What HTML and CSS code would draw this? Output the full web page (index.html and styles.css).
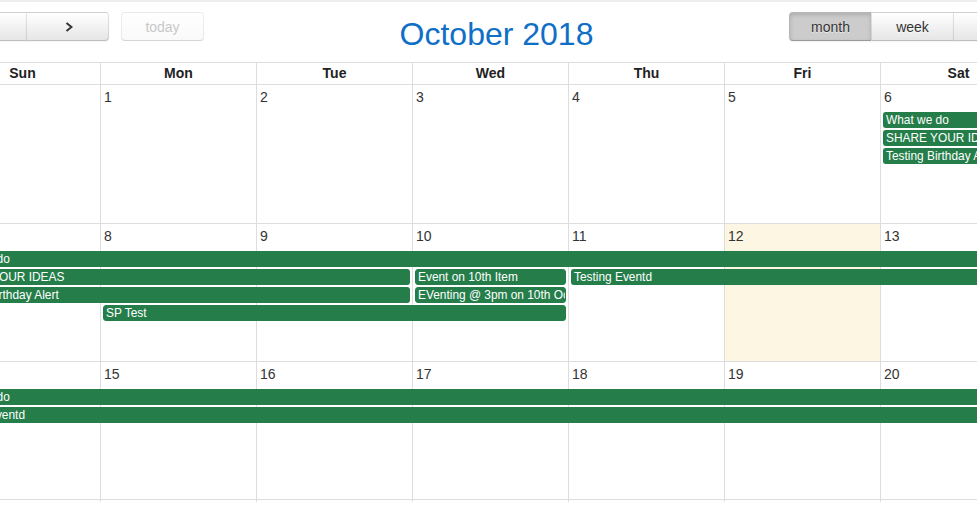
FILE: index.html
```html
<!DOCTYPE html>
<html lang="en">
<head>
<meta charset="utf-8">
<title>October 2018 – Calendar</title>
<link rel="stylesheet" href="styles.css">
</head>
<body>
<div class="page">
  <div class="calendar">
    <div class="toolbar">
      <div class="tb-left">
        <div class="btn-group">
          <button class="btn btn-first" aria-label="prev"><svg class="chev" width="8" height="10" viewBox="0 0 8 10"><polyline points="6.5,1 1.5,5 6.5,9" /></svg></button>
          <button class="btn btn-last" aria-label="next"><svg class="chev" width="8" height="10" viewBox="0 0 8 10"><polyline points="1.5,1 6.5,5 1.5,9" /></svg></button>
        </div>
        <button class="btn btn-alone btn-disabled">today</button>
      </div>
      <h2 class="title">October 2018</h2>
      <div class="btn-group">
        <button class="btn btn-first btn-active">month</button>
        <button class="btn">week</button>
        <button class="btn btn-last">day</button>
      </div>
    </div>

    <div class="view">
      <div class="head-row">
        <div class="head-cell">Sun</div>
        <div class="head-cell">Mon</div>
        <div class="head-cell">Tue</div>
        <div class="head-cell">Wed</div>
        <div class="head-cell">Thu</div>
        <div class="head-cell">Fri</div>
        <div class="head-cell">Sat</div>
      </div>

      <div class="scroller">
        <div class="week week-first">
          <div class="day other"><span class="num">30</span></div>
          <div class="day"><span class="num">1</span></div>
          <div class="day"><span class="num">2</span></div>
          <div class="day"><span class="num">3</span></div>
          <div class="day"><span class="num">4</span></div>
          <div class="day"><span class="num">5</span></div>
          <div class="day"><span class="num">6</span></div>

          <div class="ev r2 c7 span1 not-end">What we do</div>
          <div class="ev r3 c7 span1 not-end">SHARE YOUR IDEAS</div>
          <div class="ev r4 c7 span1 not-end">Testing Birthday Alert</div>
        </div>

        <div class="week">
          <div class="day"><span class="num">7</span></div>
          <div class="day"><span class="num">8</span></div>
          <div class="day"><span class="num">9</span></div>
          <div class="day"><span class="num">10</span></div>
          <div class="day"><span class="num">11</span></div>
          <div class="day today"><span class="num">12</span></div>
          <div class="day"><span class="num">13</span></div>

          <div class="ev r2 c1 span7 not-start not-end">What we do</div>
          <div class="ev r3 c1 span3 not-start">SHARE YOUR IDEAS</div>
          <div class="ev r3 c4 span1">Event on 10th Item</div>
          <div class="ev r3 c5 span3 not-end">Testing Eventd</div>
          <div class="ev r4 c1 span3 not-start">Testing Birthday Alert</div>
          <div class="ev r4 c4 span1">EVenting @ 3pm on 10th Oct</div>
          <div class="ev r5 c2 span3">SP Test</div>
        </div>

        <div class="week">
          <div class="day"><span class="num">14</span></div>
          <div class="day"><span class="num">15</span></div>
          <div class="day"><span class="num">16</span></div>
          <div class="day"><span class="num">17</span></div>
          <div class="day"><span class="num">18</span></div>
          <div class="day"><span class="num">19</span></div>
          <div class="day"><span class="num">20</span></div>

          <div class="ev r2 c1 span7 not-start not-end">What we do</div>
          <div class="ev r3 c1 span7 not-start not-end">Testing Eventd</div>
        </div>

        <div class="week">
          <div class="day"><span class="num">21</span></div>
          <div class="day"><span class="num">22</span></div>
          <div class="day"><span class="num">23</span></div>
          <div class="day"><span class="num">24</span></div>
          <div class="day"><span class="num">25</span></div>
          <div class="day"><span class="num">26</span></div>
          <div class="day"><span class="num">27</span></div>
        </div>
      </div>
    </div>
  </div>
</div>
</body>
</html>
```

FILE: styles.css
```css
html, body {
  margin: 0;
  padding: 0;
  background: #fff;
  overflow: hidden;
}

body {
  font-family: "Liberation Sans", Arial, sans-serif;
  font-size: 14px;
  color: #333;
}

.page {
  width: 977px;
  height: 513px;
  overflow: hidden;
  border-top: 2px solid #eee;
  box-sizing: border-box;
}

.calendar {
  width: 1093px;
  margin-left: -56px;
}

/* ---------- toolbar ---------- */
.toolbar {
  display: grid;
  grid-template-columns: auto 1fr auto;
  align-items: start;
  height: 60px;
  padding-top: 10px;
  box-sizing: border-box;
  width: 1092px;
}

.tb-left {
  display: flex;
  gap: 12px;
}

.btn-group {
  display: flex;
}

.btn {
  box-sizing: border-box;
  width: 83px;
  height: 29px;
  margin: 0;
  padding: 0;
  font-family: inherit;
  font-size: 14px;
  color: #333;
  display: flex;
  align-items: center;
  justify-content: center;
  background-color: #f5f5f5;
  background-image: linear-gradient(to bottom, #ffffff, #e6e6e6);
  border: 1px solid;
  border-color: #e6e6e6 #e6e6e6 #bfbfbf;
  border-color: rgba(0,0,0,.1) rgba(0,0,0,.1) rgba(0,0,0,.25);
  text-shadow: 0 1px 1px rgba(255,255,255,.75);
  box-shadow: inset 0 1px 0 rgba(255,255,255,.2), 0 1px 2px rgba(0,0,0,.05);
  border-radius: 0;
}

.btn + .btn {
  margin-left: -1px;
}

.btn-first {
  border-radius: 4px 0 0 4px;
}

.btn-last {
  border-radius: 0 4px 4px 0;
}

.btn-alone {
  border-radius: 4px;
}

.btn-active {
  background-color: #ccc;
  background-image: none;
  box-shadow: inset 0 2px 4px rgba(0,0,0,.15), 0 1px 2px rgba(0,0,0,.05);
}

.btn-disabled {
  opacity: .65;
  color: #aaa;
  box-shadow: none;
  background-image: linear-gradient(to bottom, #ffffff, #f7f7f7);
}

.chev {
  display: block;
  margin-left: 3px;
}

.chev polyline {
  fill: none;
  stroke: #333;
  stroke-width: 2;
}

.title {
  margin: 4px 0 0;
  font-size: 32px;
  font-weight: normal;
  line-height: 36px;
  text-align: center;
  color: #0f6fc6;
}

/* ---------- month view ---------- */
.head-row {
  display: grid;
  grid-template-columns: repeat(7, 156px);
  border-top: 1px solid #ddd;
  border-bottom: 1px solid #ddd;
}

.head-cell {
  border-left: 1px solid #ddd;
  line-height: 20px;
  padding-bottom: 1px;
  text-align: center;
  font-weight: bold;
  color: #222;
}

.scroller {
  height: 417px;
  overflow: hidden;
}

.week {
  display: grid;
  grid-template-columns: repeat(7, 156px);
  grid-template-rows: 25px repeat(4, 18px) 1fr;
  height: 138px;
}

.week-first {
  height: 139px;
}

.day {
  grid-row: 1 / -1;
  border-left: 1px solid #ddd;
  border-bottom: 1px solid #ddd;
  background: #fff;
}

.day:nth-child(1) { grid-column: 1; }
.day:nth-child(2) { grid-column: 2; }
.day:nth-child(3) { grid-column: 3; }
.day:nth-child(4) { grid-column: 4; }
.day:nth-child(5) { grid-column: 5; }
.day:nth-child(6) { grid-column: 6; }
.day:nth-child(7) { grid-column: 7; }

.day.today {
  background: #fcf6e3;
}

.num {
  display: block;
  padding: 2px 3px;
  line-height: 20px;
  font-size: 14px;
  color: #333;
}

.day.other .num {
  color: #999;
}

/* ---------- events ---------- */
.ev {
  box-sizing: border-box;
  height: 16px;
  margin: 2px 2px 0 3px;
  padding: 0 2px;
  line-height: 14px;
  font-size: 11.9px;
  color: #fff;
  background: #257e4a;
  border: 1px solid #257e4a;
  border-radius: 3px;
  white-space: nowrap;
  overflow: hidden;
}

.ev.not-start {
  margin-left: 0;
  border-left-width: 0;
  padding-left: 3px;
  border-top-left-radius: 0;
  border-bottom-left-radius: 0;
}

.ev.not-end {
  margin-right: 0;
  border-right-width: 0;
  border-top-right-radius: 0;
  border-bottom-right-radius: 0;
}

.r2 { grid-row: 2; }
.r3 { grid-row: 3; }
.r4 { grid-row: 4; }
.r5 { grid-row: 5; }

.c1 { grid-column-start: 1; }
.c2 { grid-column-start: 2; }
.c4 { grid-column-start: 4; }
.c5 { grid-column-start: 5; }
.c7 { grid-column-start: 7; }

.span1 { grid-column-end: span 1; }
.span3 { grid-column-end: span 3; }
.span7 { grid-column-end: span 7; }
```
